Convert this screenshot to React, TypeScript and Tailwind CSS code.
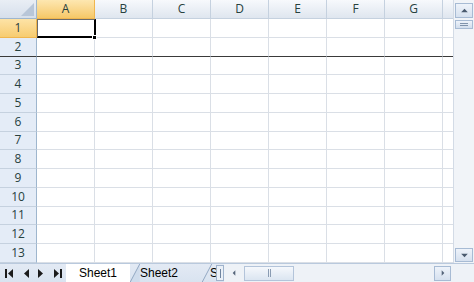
import React from 'react';

const columns = ['A', 'B', 'C', 'D', 'E', 'F', 'G'];
const rows = Array.from({ length: 13 }, (_, i) => i + 1);

function Tri({ dir, className }: { dir: 'up' | 'down' | 'left' | 'right'; className?: string }) {
  const pts = {
    up: '0,5 4,1 8,5',
    down: '0,1 4,5 8,1',
    left: '5,0 1,4 5,8',
    right: '1,0 5,4 1,8',
  }[dir];
  const vb = dir === 'up' || dir === 'down' ? '0 0 8 6' : '0 0 6 8';
  return (
    <svg viewBox={vb} className={className} fill="currentColor">
      <polygon points={pts} />
    </svg>
  );
}

function NavButtons() {
  return (
    <div className="flex items-center h-full pl-[5px] gap-[9px] text-[#1b1b1b] w-[66px] shrink-0">
      <svg width="9" height="9" viewBox="0 0 9 9" fill="currentColor">
        <rect x="0" y="0" width="2" height="9" />
        <polygon points="8,0 3,4.5 8,9" />
      </svg>
      <svg width="6" height="9" viewBox="0 0 6 9" fill="currentColor">
        <polygon points="6,0 1,4.5 6,9" />
      </svg>
      <svg width="6" height="9" viewBox="0 0 6 9" fill="currentColor">
        <polygon points="0,0 5,4.5 0,9" />
      </svg>
      <svg width="9" height="9" viewBox="0 0 9 9" fill="currentColor">
        <polygon points="1,0 6,4.5 1,9" />
        <rect x="7" y="0" width="2" height="9" />
      </svg>
    </div>
  );
}

export default function App() {
  return (
    <div
      className="w-[474px] h-[282px] overflow-hidden bg-white flex flex-col relative select-none"
      style={{ fontFamily: '"Open Sans", "Liberation Sans", sans-serif' }}
    >
      <div className="flex flex-1 min-h-0">
        {/* grid */}
        <div className="flex-1 flex flex-col relative">
          <div className="flex h-[19px] shrink-0">
            <div className="w-[37px] shrink-0 border-r border-b border-[#9eb6ce] bg-gradient-to-b from-[#e9eef5] to-[#d6dfeb] relative">
              <svg className="absolute right-[2px] bottom-[2px]" width="13" height="13" viewBox="0 0 13 13">
                <polygon points="13,0 13,13 0,13" fill="#b8c6d8" />
              </svg>
            </div>
            {columns.map((c) => (
              <div
                key={c}
                className={
                  c === 'A'
                    ? 'w-[58px] shrink-0 flex items-center justify-center text-[12px] border-r border-b border-[#f0b64e] bg-gradient-to-b from-[#fde7b0] to-[#f6c867] text-[#27413e]'
                    : 'w-[58px] shrink-0 flex items-center justify-center text-[12px] border-r border-b border-[#c5d1df] bg-gradient-to-b from-[#f7f9fc] to-[#dfe6ef] text-[#27413e]'
                }
              >
                {c}
              </div>
            ))}
            <div className="flex-1 border-b border-[#c5d1df] bg-gradient-to-b from-[#f7f9fc] to-[#dfe6ef]" />
          </div>

          {rows.map((r) => {
            const gridBorder = r === 2 ? 'border-b-[#3a3a3a]' : 'border-b-[#dadfe6]';
            return (
              <div key={r} className="flex h-[18.75px] shrink-0">
                <div
                  className={
                    r === 1
                      ? 'w-[37px] shrink-0 flex items-center justify-center text-[12px] border-r border-b border-r-[#f0b64e] border-b-[#f0b64e] bg-gradient-to-b from-[#fde3a6] to-[#f7cc70] text-[#27413e]'
                      : `w-[37px] shrink-0 flex items-center justify-center text-[12px] border-r border-b border-r-[#9eb6ce] ${r === 2 ? 'border-b-[#3a3a3a]' : 'border-b-[#c5d1df]'} bg-[#e4ecf7] text-[#27413e]`
                  }
                >
                  {r}
                </div>
                {columns.map((c) => (
                  <div key={c} className={`w-[58px] shrink-0 border-r border-b border-r-[#dadfe6] ${gridBorder}`} />
                ))}
                <div className={`flex-1 border-b ${gridBorder}`} />
              </div>
            );
          })}

          {/* active cell A1 */}
          <div className="absolute left-[37px] top-[19px] w-[59px] h-[19px] border-t border-l border-[#6b6b6b] border-r-2 border-b-2 border-r-black border-b-black" />
          <div className="absolute left-[92px] top-[35px] w-[5px] h-[5px] bg-black border border-white" />
        </div>

        {/* vertical scrollbar */}
        <div className="w-[21px] shrink-0 border-l border-[#d3dbe6] bg-[#f1f4f8] flex flex-col items-center pt-[3px] pb-[1px]">
          <div className="w-[18px] h-[15px] border border-[#a7bbd4] bg-gradient-to-b from-[#eef3fa] to-[#d6e1ef] flex items-center justify-center text-[#4a5a6e]">
            <Tri dir="up" className="w-[7px] h-[5px]" />
          </div>
          <div className="w-[18px] h-[9px] mt-[2px] border border-[#a7bbd4] bg-gradient-to-b from-[#eef3fa] to-[#d2deed] flex flex-col items-center justify-center gap-[1px]">
            <div className="w-[8px] h-px bg-[#8093ab]" />
            <div className="w-[8px] h-px bg-[#8093ab]" />
          </div>
          <div className="flex-1" />
          <div className="w-[18px] h-[14px] border border-[#a7bbd4] bg-gradient-to-b from-[#eef3fa] to-[#d6e1ef] flex items-center justify-center text-[#4a5a6e]">
            <Tri dir="down" className="w-[7px] h-[5px]" />
          </div>
        </div>
      </div>

      {/* bottom bar: sheet tabs + horizontal scrollbar */}
      <div className="h-[19px] shrink-0 flex bg-gradient-to-b from-[#e3eaf4] to-[#d9e3f0] border-t border-[#b9c9dd]" style={{ fontFamily: '"Liberation Sans", Arial, sans-serif' }}>
        <NavButtons />
        <div className="flex h-full items-stretch w-[150px] shrink-0 overflow-hidden">
          <div className="relative w-[64px] shrink-0 bg-white flex items-center justify-center text-[12px] text-black -mt-px">
            Sheet1
          </div>
          <div className="relative w-[72px] shrink-0 flex items-center text-[12px] text-black pl-[10px]">
            <svg className="absolute left-0 top-0 h-full" width="10" height="19" viewBox="0 0 10 19">
              <polygon points="0,19 10,0 10,19" fill="#cfdcec" />
              <line x1="0" y1="19" x2="10" y2="0" stroke="#8fa5c1" strokeWidth="1" />
            </svg>
            <span className="relative">Sheet2</span>
          </div>
          <div className="relative w-[30px] shrink-0 flex items-center text-[12px] text-black pl-[8px]">
            <svg className="absolute left-0 top-0 h-full" width="10" height="19" viewBox="0 0 10 19">
              <line x1="0" y1="19" x2="10" y2="0" stroke="#8fa5c1" strokeWidth="1" />
            </svg>
            <span className="relative">Sheet3</span>
          </div>
        </div>
        <div className="w-[8px] shrink-0 my-[1px] border border-[#9fb3cc] bg-[#eaf0f7] flex items-center justify-center">
          <div className="w-px h-[9px] bg-[#6f84a0]" />
        </div>
        <div className="flex-1 flex items-center bg-[#eef2f7] pl-[2px] pr-[2px]">
          <div className="w-[15px] h-[15px] flex items-center justify-center text-[#55657a]">
            <Tri dir="left" className="w-[4px] h-[6px]" />
          </div>
          <div className="ml-[3px] w-[50px] h-[15px] border border-[#b3c4da] bg-gradient-to-b from-[#f5f8fc] to-[#dbe5f1] flex items-center justify-center">
            <div className="w-[3px] h-[8px] border-x border-[#8a9cb3]" />
          </div>
          <div className="flex-1" />
          <div className="w-[17px] h-[15px] border border-[#a7bbd4] bg-gradient-to-b from-[#eef3fa] to-[#d6e1ef] flex items-center justify-center text-[#55657a]">
            <Tri dir="right" className="w-[4px] h-[6px]" />
          </div>
        </div>
        <div className="w-[21px] shrink-0 bg-[#eef2f7]" />
      </div>
    </div>
  );
}
